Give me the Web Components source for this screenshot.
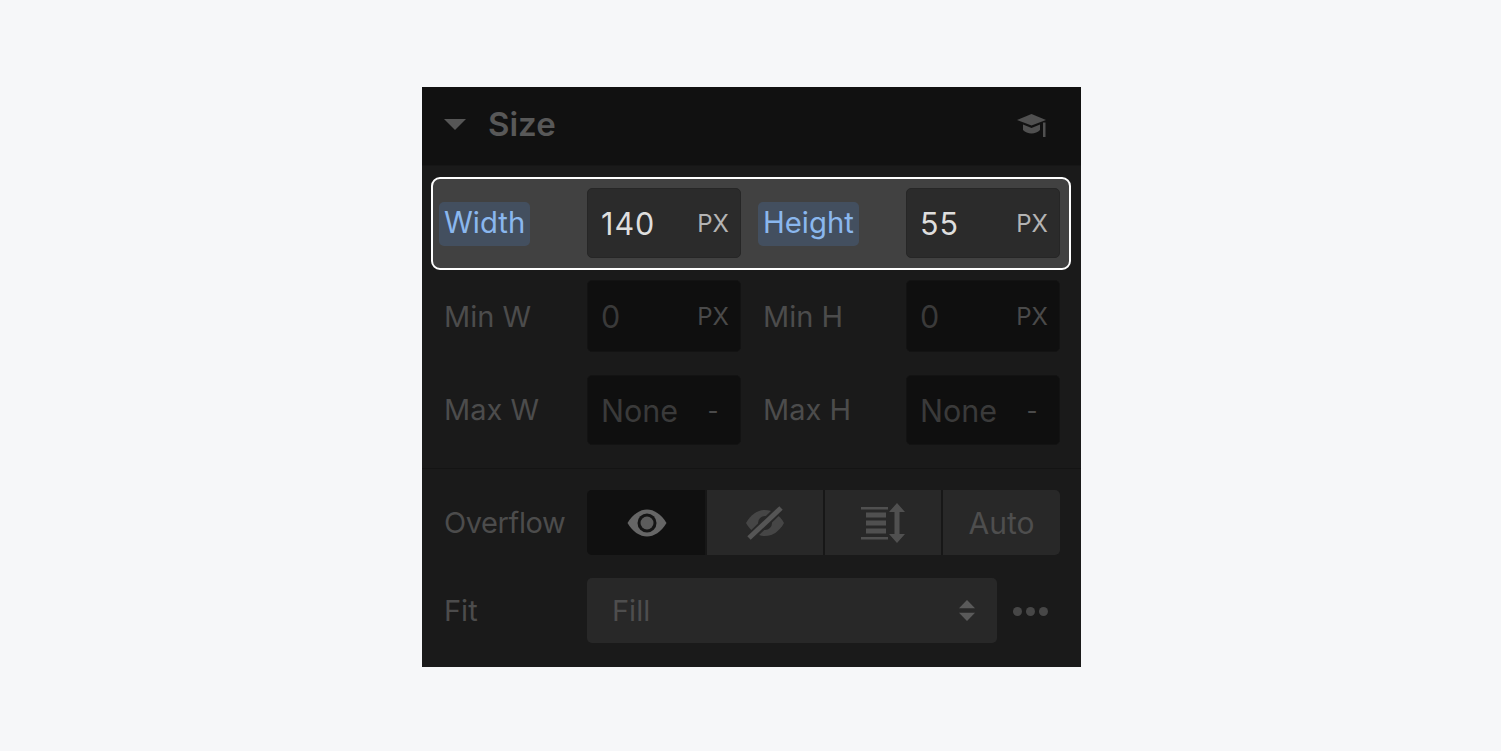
<!DOCTYPE html>
<html lang="en">
<head>
<meta charset="utf-8">
<title>Size panel</title>
<style>
    html, body { margin: 0; height: 100%; }
    body {
        background: #f6f7f9;
        font-family: Inter, "Noto Sans", sans-serif;
        box-sizing: border-box;
        padding: 87px 0 0 422px;
        overflow: hidden;
    }
</style>
</head>
<body>
<size-panel></size-panel>

<script>
class PanelHeader extends HTMLElement {
    constructor() {
        super();
        this.attachShadow({ mode: 'open' });
        this.shadowRoot.innerHTML = `
            <style>
                :host {
                    display: flex;
                    align-items: center;
                    box-sizing: border-box;
                    height: 79px;
                    padding: 0 34px 4px 22px;
                    background: #111;
                    border-bottom: 1px solid #161616;
                }
                .caret {
                    width: 0;
                    height: 0;
                    border-left: 11px solid transparent;
                    border-right: 11px solid transparent;
                    border-top: 11px solid #565656;
                    margin-right: 22px;
                }
                .title {
                    flex: 1;
                    font-size: 33px;
                    font-weight: 600;
                    color: #585858;
                }
                svg { display: block; margin-top: 3px; }
            </style>
            <span class="caret"></span>
            <span class="title"><slot></slot></span>
            <svg width="30" height="23" viewBox="0 0 30 23" fill="#505050">
                <path d="M14.500 0 L29 6 L14.500 11.500 L0 6 Z"/>
                <path d="M6 10.500 L14.500 14 L23 10.500 L23 16 C19 20.500 10 20.500 6 16 Z"/>
                <rect x="26" y="8.500" width="2.500" height="14.500"/>
            </svg>
        `;
    }
}

class NumField extends HTMLElement {
    constructor() {
        super();
        this.attachShadow({ mode: 'open' });
        this.shadowRoot.innerHTML = `
            <style>
                :host {
                    display: flex;
                    align-items: center;
                    justify-content: space-between;
                    box-sizing: border-box;
                    width: 154px;
                    height: var(--field-h, 72px);
                    padding: 0 11px 0 13px;
                    background: var(--field-bg, #0f0f0f);
                    border: 1px solid var(--field-border, #131313);
                    border-radius: 5px;
                }
                .value {
                    font-size: 30.500px;
                    letter-spacing: var(--value-ls, 0);
                    color: var(--value-color, #3a3a3a);
                }
                .unit {
                    width: 32px;
                    text-align: center;
                    font-size: 24px;
                    color: var(--unit-color, #4a4a4a);
                }
            </style>
            <span class="value"></span>
            <span class="unit"></span>
        `;
    }

    connectedCallback() {
        this.shadowRoot.querySelector('.value').textContent = this.getAttribute('value');
        this.shadowRoot.querySelector('.unit').textContent = this.getAttribute('unit');
    }
}

class DimRow extends HTMLElement {
    constructor() {
        super();
        this.attachShadow({ mode: 'open' });
        this.shadowRoot.innerHTML = `
            <style>
                :host {
                    display: grid;
                    grid-template-columns: 143px 154px 165px 154px;
                    align-items: center;
                    padding: 0 21px 0 22px;
                    font-size: 29px;
                    color: #4c4c4c;
                }
                .b { padding-left: 5px; margin-left: 17px; }
            </style>
            <span><slot name="label-a"></slot></span>
            <slot name="field-a"></slot>
            <span class="b"><slot name="label-b"></slot></span>
            <slot name="field-b"></slot>
        `;
    }
}

class ActiveRow extends HTMLElement {
    constructor() {
        super();
        this.attachShadow({ mode: 'open' });
        this.shadowRoot.innerHTML = `
            <style>
                :host {
                    display: grid;
                    grid-template-columns: 148px 154px 165px 154px;
                    align-items: center;
                    box-sizing: border-box;
                    width: 640px;
                    height: 93px;
                    margin-left: 9px;
                    padding: 0 9px 1px 6px;
                    background: #414141;
                    border: 2px solid #fff;
                    border-radius: 9px;
                    font-size: 29.300px;
                    --field-h: 70px;
                    --field-bg: #2b2b2b;
                    --field-border: #262626;
                    --value-color: #dedede;
                    --value-ls: 1px;
                    --unit-color: #b4b4b4;
                }
                .chip {
                    justify-self: start;
                    box-sizing: border-box;
                    height: 44px;
                    margin-top: 2px;
                    line-height: 42px;
                    padding: 0 5px;
                    background: #434f5f;
                    border-radius: 5px;
                    color: #8ab7ee;
                }
                .chip.b { margin-left: 17px; }
            </style>
            <span class="chip"><slot name="label-a"></slot></span>
            <slot name="field-a"></slot>
            <span class="chip b"><slot name="label-b"></slot></span>
            <slot name="field-b"></slot>
        `;
    }
}

class OverflowControl extends HTMLElement {
    constructor() {
        super();
        this.attachShadow({ mode: 'open' });
        this.shadowRoot.innerHTML = `
            <style>
                :host {
                    display: grid;
                    grid-template-columns: 118px 116px 116px 117px;
                    column-gap: 2px;
                    height: 65px;
                    background: #171717;
                    border-radius: 5px;
                }
                div {
                    display: flex;
                    align-items: center;
                    justify-content: center;
                    background: #282828;
                    font-size: 30px;
                    color: #4e4e4e;
                }
                div:first-of-type { background: #101010; border-radius: 5px 0 0 5px; }
                div:last-of-type { border-radius: 0 5px 5px 0; }
                svg { display: block; }
                .eye { margin-left: 1px; }
                .scroll { margin-left: -1px; }
            </style>
            <div>
                <svg class="eye" width="40" height="28" viewBox="0 0 40 28">
                    <path d="M0.500 14 C6 5 13 0.500 20 0.500 C27 0.500 34 5 39.500 14 C34 23 27 27.500 20 27.500 C13 27.500 6 23 0.500 14 Z" fill="#666"/>
                    <circle cx="20" cy="14" r="9.500" fill="#151515"/>
                    <circle cx="20" cy="14" r="6.500" fill="#5c5c5c"/>
                </svg>
            </div>
            <div>
                <svg width="40" height="36" viewBox="0 0 40 36">
                    <path d="M1 18 C6 9 13 5 20 5 C27 5 34 9 39 18 C34 27 27 31 20 31 C13 31 6 27 1 18 Z" fill="#464646"/>
                    <circle cx="20" cy="18" r="7" fill="#282828"/>
                    <path d="M5 32.500 L35 3.500" stroke="#282828" stroke-width="9"/>
                    <path d="M4 33 L36 3" stroke="#555" stroke-width="5"/>
                </svg>
            </div>
            <div>
                <svg class="scroll" width="46" height="40" viewBox="0 0 46 40" fill="#505050">
                    <rect x="1" y="4" width="27" height="2.500"/>
                    <rect x="6" y="9.500" width="20" height="5"/>
                    <rect x="6" y="17.500" width="20" height="5"/>
                    <rect x="6" y="25.500" width="20" height="5"/>
                    <rect x="1" y="34" width="27" height="2.500"/>
                    <path d="M37 0 L45 9 L39.500 9 L39.500 31 L45 31 L37 40 L29 31 L34.500 31 L34.500 9 L29 9 Z"/>
                </svg>
            </div>
            <div>Auto</div>
        `;
    }
}

class FitSelect extends HTMLElement {
    constructor() {
        super();
        this.attachShadow({ mode: 'open' });
        this.shadowRoot.innerHTML = `
            <style>
                :host {
                    display: flex;
                    align-items: center;
                    justify-content: space-between;
                    box-sizing: border-box;
                    width: 410px;
                    height: 65px;
                    padding: 0 22px 0 25px;
                    background: #282828;
                    border-radius: 5px;
                    font-size: 29px;
                    color: #4e4e4e;
                }
                svg { display: block; }
            </style>
            <span><slot></slot></span>
            <svg width="16" height="21" viewBox="0 0 16 21" fill="#5a5a5a">
                <path d="M8 0 L16 8.300 L0 8.300 Z"/>
                <path d="M0 12.700 L16 12.700 L8 21 Z"/>
            </svg>
        `;
    }
}

class SizePanel extends HTMLElement {
    constructor() {
        super();
        this.attachShadow({ mode: 'open' });
        this.shadowRoot.innerHTML = `
            <style>
                :host {
                    display: block;
                    width: 659px;
                    height: 580px;
                    background: #1a1a1a;
                    color: #4c4c4c;
                    overflow: hidden;
                }
                active-row { margin-top: 11px; }
                .min { margin-top: 10px; }
                .max { margin-top: 23px; --field-h: 70px; }
                .max span[slot] { position: relative; top: -1px; }
                hr {
                    height: 1px;
                    margin: 23px 0 0;
                    border: 0;
                    background: #141414;
                }
                .line {
                    display: grid;
                    grid-template-columns: 143px auto 1fr;
                    align-items: center;
                    padding: 0 21px 0 22px;
                    font-size: 29px;
                }
                .overflow { margin-top: 21px; grid-template-columns: 143px 473px; }
                .overflow span { letter-spacing: -0.400px; }
                .fit { margin-top: 23px; }
                .dots { display: flex; justify-content: flex-end; gap: 4px; padding: 1px 12px 0 0; }
                .dots i {
                    width: 9px;
                    height: 9px;
                    border-radius: 50%;
                    background: #474747;
                }
            </style>
            <panel-header>Size</panel-header>
            <active-row>
                <span slot="label-a">Width</span>
                <num-field slot="field-a" value="140" unit="PX"></num-field>
                <span slot="label-b">Height</span>
                <num-field slot="field-b" value="55" unit="PX"></num-field>
            </active-row>
            <dim-row class="min">
                <span slot="label-a">Min W</span>
                <num-field slot="field-a" value="0" unit="PX"></num-field>
                <span slot="label-b">Min H</span>
                <num-field slot="field-b" value="0" unit="PX"></num-field>
            </dim-row>
            <dim-row class="max">
                <span slot="label-a">Max W</span>
                <num-field slot="field-a" value="None" unit="-"></num-field>
                <span slot="label-b">Max H</span>
                <num-field slot="field-b" value="None" unit="-"></num-field>
            </dim-row>
            <hr>
            <div class="line overflow">
                <span>Overflow</span>
                <overflow-control></overflow-control>
            </div>
            <div class="line fit">
                <span>Fit</span>
                <fit-select>Fill</fit-select>
                <span class="dots"><i></i><i></i><i></i></span>
            </div>
        `;
    }
}

customElements.define('panel-header', PanelHeader);
customElements.define('num-field', NumField);
customElements.define('dim-row', DimRow);
customElements.define('active-row', ActiveRow);
customElements.define('overflow-control', OverflowControl);
customElements.define('fit-select', FitSelect);
customElements.define('size-panel', SizePanel);
</script>
</body>
</html>
